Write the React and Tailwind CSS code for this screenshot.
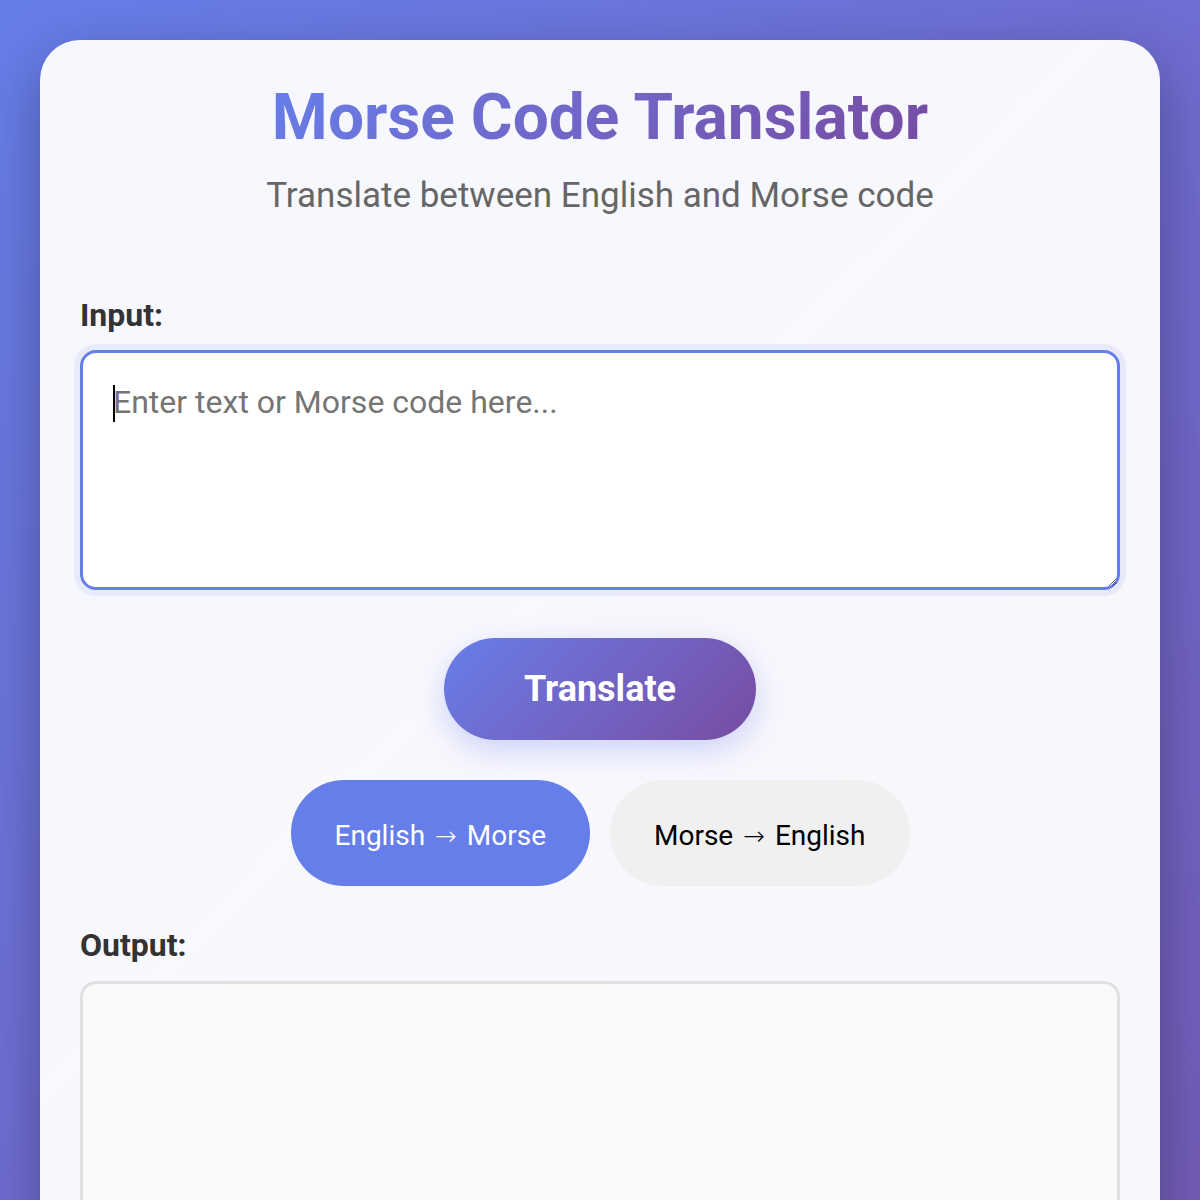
import { useState } from 'react';

const MORSE = {
    A: '.-', B: '-...', C: '-.-.', D: '-..', E: '.', F: '..-.', G: '--.', H: '....', I: '..', J: '.---',
    K: '-.-', L: '.-..', M: '--', N: '-.', O: '---', P: '.--.', Q: '--.-', R: '.-.', S: '...', T: '-',
    U: '..-', V: '...-', W: '.--', X: '-..-', Y: '-.--', Z: '--..',
    0: '-----', 1: '.----', 2: '..---', 3: '...--', 4: '....-', 5: '.....', 6: '-....', 7: '--...', 8: '---..', 9: '----.',
};
const REVERSE = Object.fromEntries(Object.entries(MORSE).map(([k, v]) => [v, k]));

function translate(text, mode) {
    if (mode === 'toMorse') {
        return text.toUpperCase().split(' ').map(w => w.split('').map(c => MORSE[c] || '').join(' ')).join(' / ');
    }
    return text.trim().split(' / ').map(w => w.split(' ').map(c => REVERSE[c] || '').join('')).join(' ');
}

function ModeButton({ active, from, to, onClick }) {
    return (
        <button
            onClick={onClick}
            className={
                active
                    ? 'rounded-full bg-[#667eea] px-[44px] pt-[39px] pb-[33px] text-[28px] leading-[34px] text-white'
                    : 'rounded-full bg-[#f0f0f0] px-[44px] pt-[39px] pb-[33px] text-[28px] leading-[34px] text-black'
            }
        >
            {from} <span className="mx-[3px] font-['DejaVu_Sans',sans-serif] text-[26px] font-extralight">→</span> {to}
        </button>
    );
}

export default function App() {
    const [input, setInput] = useState('');
    const [output, setOutput] = useState('');
    const [mode, setMode] = useState('toMorse');

    return (
        <div className="min-h-[2400px] bg-linear-135 from-[#667eea] to-[#764ba2] p-[40px] font-['Roboto',sans-serif]">
            <div className="rounded-[40px] bg-white/95 p-[40px] shadow-[0_20px_60px_rgba(0,0,0,0.3)]">
                <div className="text-center">
                    <h1 className="inline-block bg-linear-135 from-[#667eea] to-[#764ba2] bg-clip-text text-[64px] font-bold leading-[1.2] text-transparent">
                        Morse Code Translator
                    </h1>
                    <p className="mt-[19px] text-[35px] leading-[40px] text-[#666]">
                        Translate between English and Morse code
                    </p>
                </div>

                <label className="mt-[80px] mb-[16px] block text-[32px] font-bold leading-[38px] text-[#333]">Input:</label>
                <div className="relative">
                    <textarea
                        autoFocus
                        value={input}
                        onChange={e => setInput(e.target.value)}
                        placeholder="Enter text or Morse code here..."
                        className="block h-[240px] w-full rounded-[16px] border-[3px] border-[#667eea] bg-white px-[30px] pt-[30px] text-[32px] leading-[38px] text-[#333] shadow-[0_0_0_6px_rgba(102,126,234,0.1)] outline-none placeholder:text-[#757575]"
                    />
                    {!input && (
                        <span className="pointer-events-none absolute left-[33px] top-[35px] h-[37px] w-[2px] bg-black" />
                    )}
                </div>

                <div className="mt-[48px] flex justify-center">
                    <button
                        onClick={() => setOutput(translate(input, mode))}
                        className="rounded-full bg-linear-135 from-[#667eea] to-[#764ba2] px-[80px] py-[29px] text-[36px] font-bold leading-[44px] text-white shadow-[0_10px_30px_rgba(102,126,234,0.3)]"
                    >
                        Translate
                    </button>
                </div>

                <div className="mt-[40px] flex justify-center gap-[20px]">
                    <ModeButton active={mode === 'toMorse'} from="English" to="Morse" onClick={() => setMode('toMorse')} />
                    <ModeButton active={mode === 'toEnglish'} from="Morse" to="English" onClick={() => setMode('toEnglish')} />
                </div>

                <label className="mt-[40px] mb-[17px] block text-[32px] font-bold leading-[38px] text-[#333]">Output:</label>
                <textarea
                    readOnly
                    value={output}
                    className="block h-[240px] w-full rounded-[16px] border-[3px] border-[#e0e0e0] bg-[#f8f9fa] px-[30px] pt-[30px] text-[32px] leading-[38px] text-[#333] outline-none"
                />
            </div>
        </div>
    );
}
